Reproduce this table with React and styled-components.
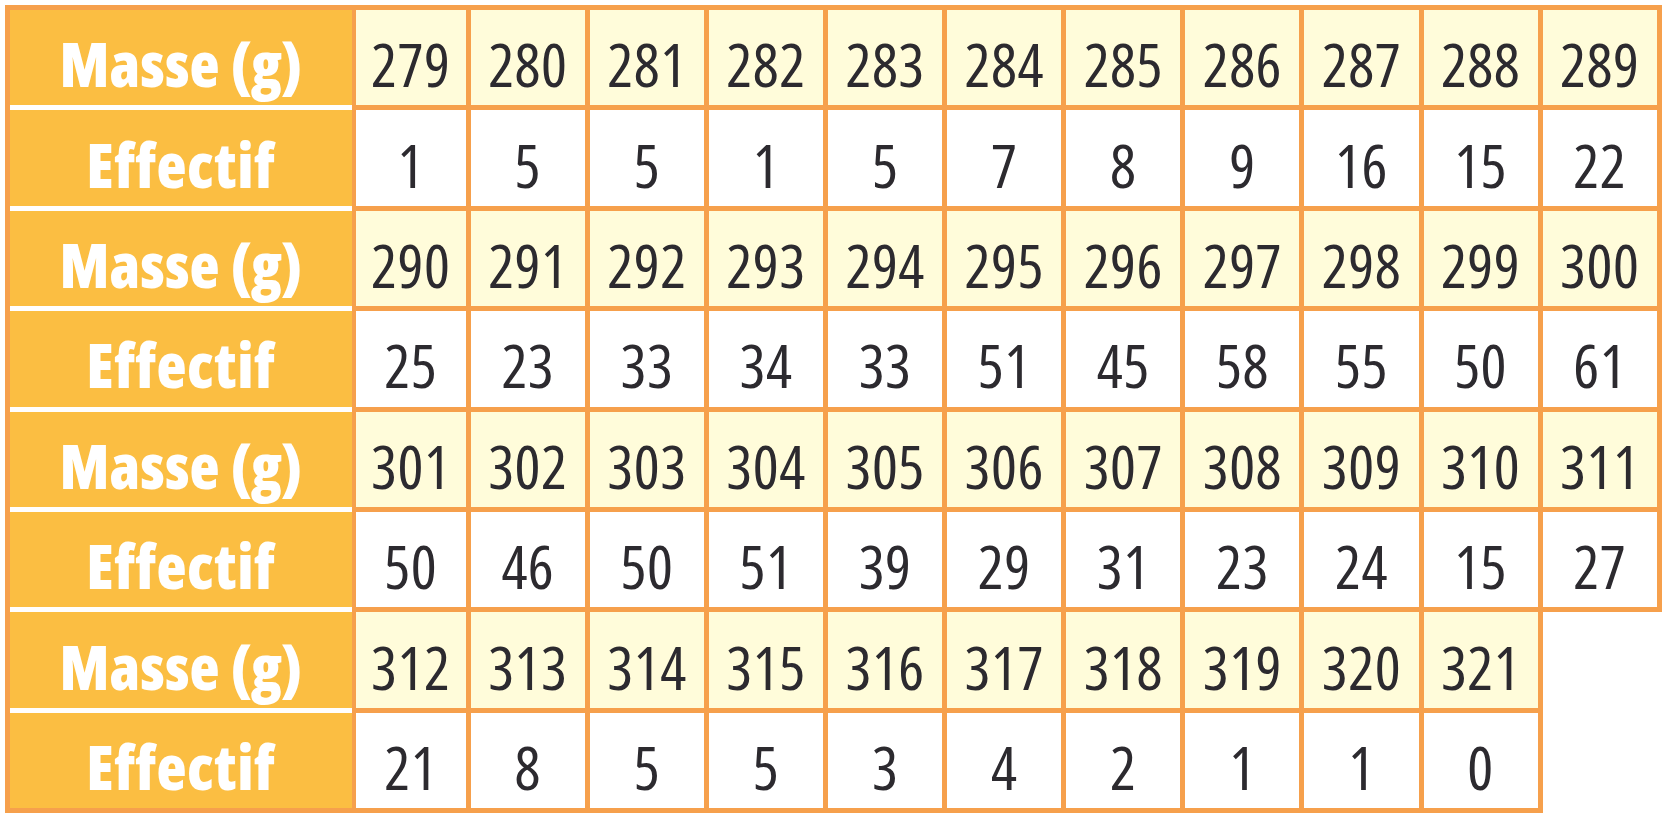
import React from "react";
import styled, { createGlobalStyle } from "styled-components";

const Global = createGlobalStyle`
  html, body { margin: 0; padding: 0; background: #ffffff; }
  body { font-family: "Open Sans", "Noto Sans", sans-serif; }
`;

const ORANGE = "#f6a04c";
const HEADER = "#fbbe42";
const PALE = "#fffcda";
const INK = "#2c2a2f";

const Page = styled.div`
  padding: 5px;
`;

const Grid = styled.div`
  display: inline-grid;
  grid-template-columns: 341.7px repeat(11, 119.1px);
  grid-auto-rows: 100.4px;
  border-left: 5px solid ${ORANGE};
  border-top: 5px solid ${ORANGE};
  box-sizing: border-box;
`;

const Head = styled.div`
  box-sizing: border-box;
  background: ${HEADER};
  border-bottom: 5px solid ${(p) => (p.$last ? ORANGE : "#ffffff")};
  display: flex;
  align-items: center;
  justify-content: center;
  padding-top: 11px;
  color: #ffffff;
  font-family: "Open Sans", "Noto Sans", sans-serif;
  font-weight: 800;
  font-size: 62px;
  font-stretch: 75%;
  letter-spacing: ${(p) => p.$track || "0px"};
  line-height: 1;
`;

const Cell = styled.div`
  box-sizing: border-box;
  background: ${(p) => (p.$pale ? PALE : "#ffffff")};
  border-right: 5px solid ${ORANGE};
  border-bottom: 5px solid ${ORANGE};
  border-left: ${(p) => (p.$first ? `4.4px solid ${ORANGE}` : "none")};
  display: flex;
  align-items: center;
  justify-content: center;
  padding-top: 12px;
  color: ${INK};
  font-family: "Open Sans", "Noto Sans", sans-serif;
  font-weight: 400;
  font-size: 61px;
  font-stretch: 75%;
  letter-spacing: 0.5px;
  line-height: 1;
`;

const Label = styled.span`
  white-space: nowrap;
`;

const groups = [
  {
    masses: [279, 280, 281, 282, 283, 284, 285, 286, 287, 288, 289],
    counts: [1, 5, 5, 1, 5, 7, 8, 9, 16, 15, 22],
  },
  {
    masses: [290, 291, 292, 293, 294, 295, 296, 297, 298, 299, 300],
    counts: [25, 23, 33, 34, 33, 51, 45, 58, 55, 50, 61],
  },
  {
    masses: [301, 302, 303, 304, 305, 306, 307, 308, 309, 310, 311],
    counts: [50, 46, 50, 51, 39, 29, 31, 23, 24, 15, 27],
  },
  {
    masses: [312, 313, 314, 315, 316, 317, 318, 319, 320, 321],
    counts: [21, 8, 5, 5, 3, 4, 2, 1, 1, 0],
  },
];

export default function App() {
  const rows = [];
  groups.forEach((g, gi) => {
    const lastGroup = gi === groups.length - 1;
    rows.push(
      <Head key={`hm${gi}`} $track="0.1px">
        <Label>Masse (g)</Label>
      </Head>
    );
    g.masses.forEach((m, i) => {
      rows.push(
        <Cell key={`m${gi}-${i}`} $pale $first={i === 0}>
          <Label>{m}</Label>
        </Cell>
      );
    });
    if (g.masses.length < 11) rows.push(<div key={`fm${gi}`} />);
    rows.push(
      <Head key={`he${gi}`} $last={lastGroup} $track="0.7px">
        <Label>Effectif</Label>
      </Head>
    );
    g.counts.forEach((c, i) => {
      rows.push(
        <Cell key={`c${gi}-${i}`} $first={i === 0}>
          <Label>{c}</Label>
        </Cell>
      );
    });
    if (g.counts.length < 11) rows.push(<div key={`fc${gi}`} />);
  });

  return (
    <>
      <Global />
      <Page>
        <Grid>{rows}</Grid>
      </Page>
    </>
  );
}
